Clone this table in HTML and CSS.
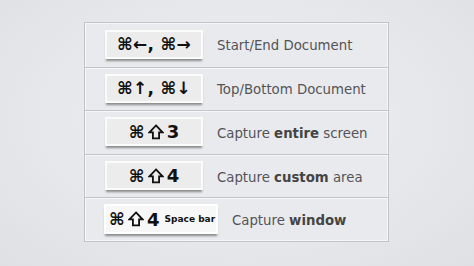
FILE: index.html
```html
<!DOCTYPE html>
<html>
<head>
<meta charset="utf-8">
<link rel="stylesheet" href="styles.css">
</head>
<body>
<div class="page">
  <div class="table">
    <div class="row">
      <div class="key"><span class="k">⌘←, ⌘→</span></div>
      <div class="label">Start/End Document</div>
    </div>
    <div class="row">
      <div class="key"><span class="k">⌘↑, ⌘↓</span></div>
      <div class="label">Top/Bottom Document</div>
    </div>
    <div class="row">
      <div class="key"><span class="k">⌘</span><svg class="shift" viewBox="0 0 14 14"><path d="M7 1.3 L12.7 7.3 H9.7 V12.6 H4.3 V7.3 H1.3 Z"/></svg><span class="num">3</span></div>
      <div class="label">Capture <b>entire</b> screen</div>
    </div>
    <div class="row">
      <div class="key"><span class="k">⌘</span><svg class="shift" viewBox="0 0 14 14"><path d="M7 1.3 L12.7 7.3 H9.7 V12.6 H4.3 V7.3 H1.3 Z"/></svg><span class="num">4</span></div>
      <div class="label">Capture <b>custom</b> area</div>
    </div>
    <div class="row">
      <div class="key wide"><span class="k">⌘</span><svg class="shift" viewBox="0 0 14 14"><path d="M7 1.3 L12.7 7.3 H9.7 V12.6 H4.3 V7.3 H1.3 Z"/></svg><span class="num">4</span><span class="space">Space bar</span></div>
      <div class="label">Capture <b>window</b></div>
    </div>
  </div>
</div>
</body>
</html>
```
FILE: styles.css
```css
html, body {
  margin: 0;
  padding: 0;
}
body {
  width: 474px;
  height: 266px;
  overflow: hidden;
  background: radial-gradient(ellipse at 50% 45%, #eeeff1 0%, #e6e7ea 60%, #dfe0e3 100%);
  font-family: "DejaVu Sans", Verdana, sans-serif;
}
.page {
  padding: 22px 0 0 84px;
}
.table {
  width: 303px;
  border: 1px solid #c3c4c8;
  box-shadow: inset 0 0 0 1px #f6f6f8;
  background: #e9eaed;
}
.row {
  height: 43.6px;
  box-sizing: border-box;
  display: flex;
  align-items: center;
  padding-left: 20px;
  gap: 14px;
  border-top: 1px solid #c3c4c8;
  box-shadow: inset 0 1px 0 #f7f7f9;
}
.row:first-child {
  border-top: none;
  box-shadow: none;
}
.key {
  width: 98px;
  height: 29px;
  box-sizing: border-box;
  background: #ececec;
  border: 2px solid #fbfbfb;
  box-shadow: 0 3px 2px -1px rgba(60, 60, 60, 0.55);
  display: flex;
  align-items: center;
  justify-content: center;
  gap: 1px;
  color: #111;
  margin-top: -1px;
  white-space: nowrap;
}
.key.wide {
  width: 114px;
  height: 30px;
  margin-left: -1px;
  background: #f7f7f7;
  border-color: #ffffff;
  justify-content: flex-start;
  padding-left: 3px;
}
.k {
  font-size: 17px;
  font-weight: bold;
  letter-spacing: 0.3px;
  white-space: nowrap;
}
.shift {
  width: 16px;
  height: 16px;
  margin: 0 2px 0 2px;
  flex: none;
}
.shift path {
  fill: none;
  stroke: #111;
  stroke-width: 1.6;
  stroke-linejoin: miter;
}
.num {
  font-size: 18px;
  font-weight: bold;
}
.space {
  font-size: 9px;
  font-weight: bold;
  margin-left: 4px;
  white-space: nowrap;
}
.label {
  font-size: 13.3px;
  color: #545457;
  white-space: nowrap;
  padding-top: 2px;
}
.label b {
  color: #444;
}
```
